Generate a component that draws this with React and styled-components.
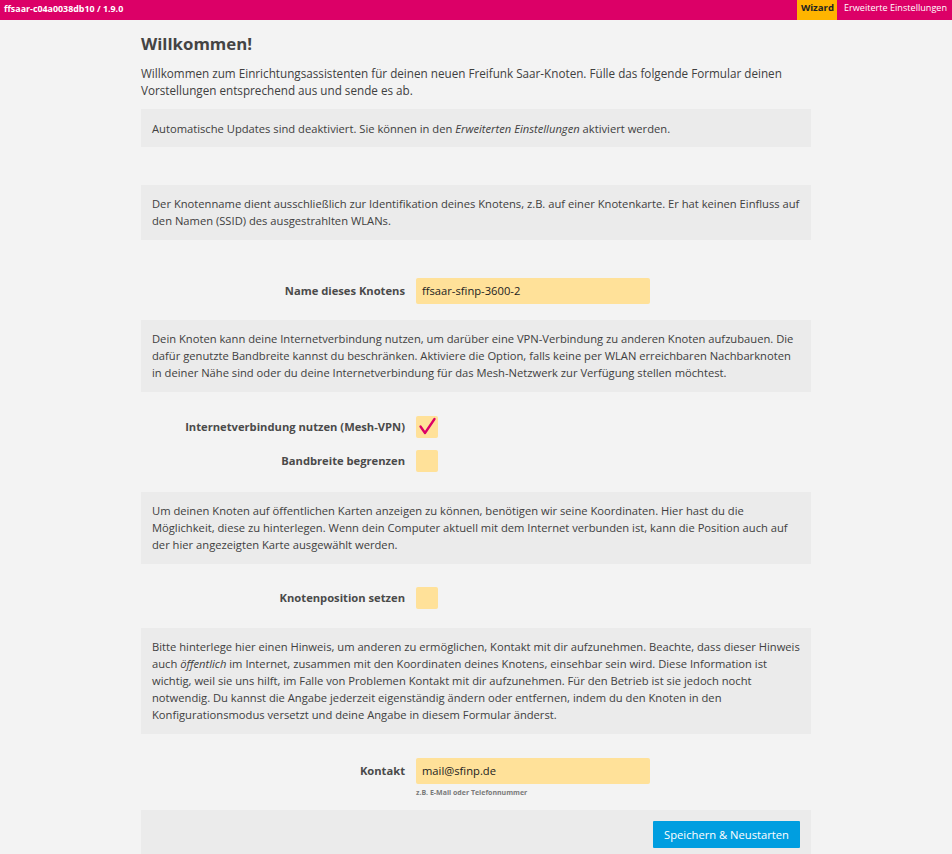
import React from "react";
import styled, { createGlobalStyle } from "styled-components";

const GlobalStyle = createGlobalStyle`
  html, body {
    margin: 0;
    padding: 0;
    background: #f3f3f3;
  }
  body {
    font-family: "Open Sans", "DejaVu Sans", sans-serif;
    font-size: 11.7px;
    color: #404040;
  }
`;

const TopBar = styled.div`
  height: 20px;
  background: #dc0067;
  display: flex;
  align-items: stretch;
  justify-content: space-between;
`;

const Brand = styled.div`
  color: #fff;
  font-weight: bold;
  font-size: 8.9px;
  line-height: 17px;
  padding-left: 4px;
`;

const Tabs = styled.div`
  display: flex;
  padding-right: 5px;
`;

const Tab = styled.div`
  font-size: ${(p) => (p.$active ? "9.6px" : "9.1px")};
  line-height: 15px;
  padding: ${(p) => (p.$active ? "0 3px 0 4px" : "0 0 0 7px")};
  height: 20px;
  background: ${(p) => (p.$active ? "#ffb400" : "transparent")};
  color: ${(p) => (p.$active ? "#222" : "#fff")};
  font-weight: ${(p) => (p.$active ? "bold" : "normal")};
`;

const Main = styled.div`
  width: 670px;
  margin: 0 auto;
  padding-top: 12px;
`;

const Title = styled.h2`
  margin: 0 0 8.5px;
  font-size: 16.8px;
  font-weight: bold;
  color: #444;
  line-height: 24px;
`;

const Intro = styled.p`
  margin: 0 0 10.5px;
  line-height: 17px;
`;

const Note = styled.div`
  background: #ebebeb;
  padding: 10.5px 11px;
  font-size: 11.2px;
  line-height: 17px;
  margin-top: ${(p) => p.$mt || 0}px;

  em {
    font-style: italic;
  }
`;

const Row = styled.div`
  display: flex;
  align-items: ${(p) => (p.$top ? "flex-start" : "center")};
  margin-top: ${(p) => p.$mt || 0}px;
`;

const Label = styled.label`
  width: 275px;
  padding-right: 11px;
  text-align: right;
  font-size: 11.2px;
  font-weight: bold;
  color: #4a4a4a;
  box-sizing: border-box;
  flex-shrink: 0;
  line-height: ${(p) => (p.$tall ? "26px" : "17px")};
`;

const Field = styled.div`
  display: flex;
  flex-direction: column;
`;

const Input = styled.div`
  width: 234px;
  height: 26px;
  box-sizing: border-box;
  background: #ffe199;
  border-radius: 2px;
  padding: 0 6px;
  font-size: 11.2px;
  line-height: 26px;
  color: #222;
`;

const Check = styled.div`
  width: 22px;
  height: 22px;
  background: #ffe199;
  border-radius: 2px;
  display: flex;
  align-items: center;
  justify-content: center;
`;

const Help = styled.div`
  font-size: 7px;
  font-weight: bold;
  color: #7a7a7a;
  margin-top: 4px;
  line-height: 10px;
`;

const Footer = styled.div`
  background: #ebebeb;
  margin-top: 12px;
  padding: 11px 11px 8px;
  display: flex;
  justify-content: flex-end;
`;

const Button = styled.button`
  background: #009ee0;
  color: #fff;
  border: none;
  border-radius: 1px;
  font-family: "Open Sans", sans-serif;
  font-size: 11.2px;
  height: 27px;
  width: 147px;
  padding: 0;
`;

const Tick = () => (
  <svg width="22" height="22" viewBox="0 0 22 22">
    <path
      d="M4.5 10.5 L9 17 L18.5 3"
      fill="none"
      stroke="#dc0067"
      strokeWidth="2.3"
      strokeLinecap="round"
      strokeLinejoin="round"
    />
  </svg>
);

const App = () => (
  <>
    <GlobalStyle />
    <TopBar>
      <Brand>ffsaar-c04a0038db10 / 1.9.0</Brand>
      <Tabs>
        <Tab $active>Wizard</Tab>
        <Tab>Erweiterte Einstellungen</Tab>
      </Tabs>
    </TopBar>
    <Main>
      <Title>Willkommen!</Title>
      <Intro>
        Willkommen zum Einrichtungsassistenten für deinen neuen Freifunk Saar-Knoten. Fülle das
        folgende Formular deinen Vorstellungen entsprechend aus und sende es ab.
      </Intro>
      <Note>
        Automatische Updates sind deaktiviert. Sie können in den <em>Erweiterten Einstellungen</em>{" "}
        aktiviert werden.
      </Note>
      <Note $mt={37.5}>
        Der Knotenname dient ausschließlich zur Identifikation deines Knotens, z.B. auf einer
        Knotenkarte. Er hat keinen Einfluss auf den Namen (SSID) des ausgestrahlten WLANs.
      </Note>
      <Row $mt={38}>
        <Label>Name dieses Knotens</Label>
        <Input>ffsaar-sfinp-3600-2</Input>
      </Row>
      <Note $mt={16}>
        Dein Knoten kann deine Internetverbindung nutzen, um darüber eine VPN-Verbindung zu anderen
        Knoten aufzubauen. Die dafür genutzte Bandbreite kannst du beschränken. Aktiviere die
        Option, falls keine per WLAN erreichbaren Nachbarknoten in deiner Nähe sind oder du deine
        Internetverbindung für das Mesh-Netzwerk zur Verfügung stellen möchtest.
      </Note>
      <Row $mt={24}>
        <Label>Internetverbindung nutzen (Mesh-VPN)</Label>
        <Check>
          <Tick />
        </Check>
      </Row>
      <Row $mt={12}>
        <Label>Bandbreite begrenzen</Label>
        <Check />
      </Row>
      <Note $mt={20}>
        Um deinen Knoten auf öffentlichen Karten anzeigen zu können, benötigen wir seine
        Koordinaten. Hier hast du die Möglichkeit, diese zu hinterlegen. Wenn dein Computer aktuell
        mit dem Internet verbunden ist, kann die Position auch auf der hier angezeigten Karte
        ausgewählt werden.
      </Note>
      <Row $mt={23}>
        <Label>Knotenposition setzen</Label>
        <Check />
      </Row>
      <Note $mt={19}>
        Bitte hinterlege hier einen Hinweis, um anderen zu ermöglichen, Kontakt mit dir aufzunehmen.
        Beachte, dass dieser Hinweis auch <em>öffentlich</em> im Internet, zusammen mit den
        Koordinaten deines Knotens, einsehbar sein wird. Diese Information ist wichtig, weil sie
        uns hilft, im Falle von Problemen Kontakt mit dir aufzunehmen. Für den Betrieb ist sie
        jedoch nocht notwendig. Du kannst die Angabe jederzeit eigenständig ändern oder entfernen,
        indem du den Knoten in den Konfigurationsmodus versetzt und deine Angabe in diesem Formular
        änderst.
      </Note>
      <Row $mt={24} $top>
        <Label $tall>Kontakt</Label>
        <Field>
          <Input>mail@sfinp.de</Input>
          <Help>z.B. E-Mail oder Telefonnummer</Help>
        </Field>
      </Row>
      <Footer>
        <Button>Speichern &amp; Neustarten</Button>
      </Footer>
    </Main>
  </>
);

export default App;
